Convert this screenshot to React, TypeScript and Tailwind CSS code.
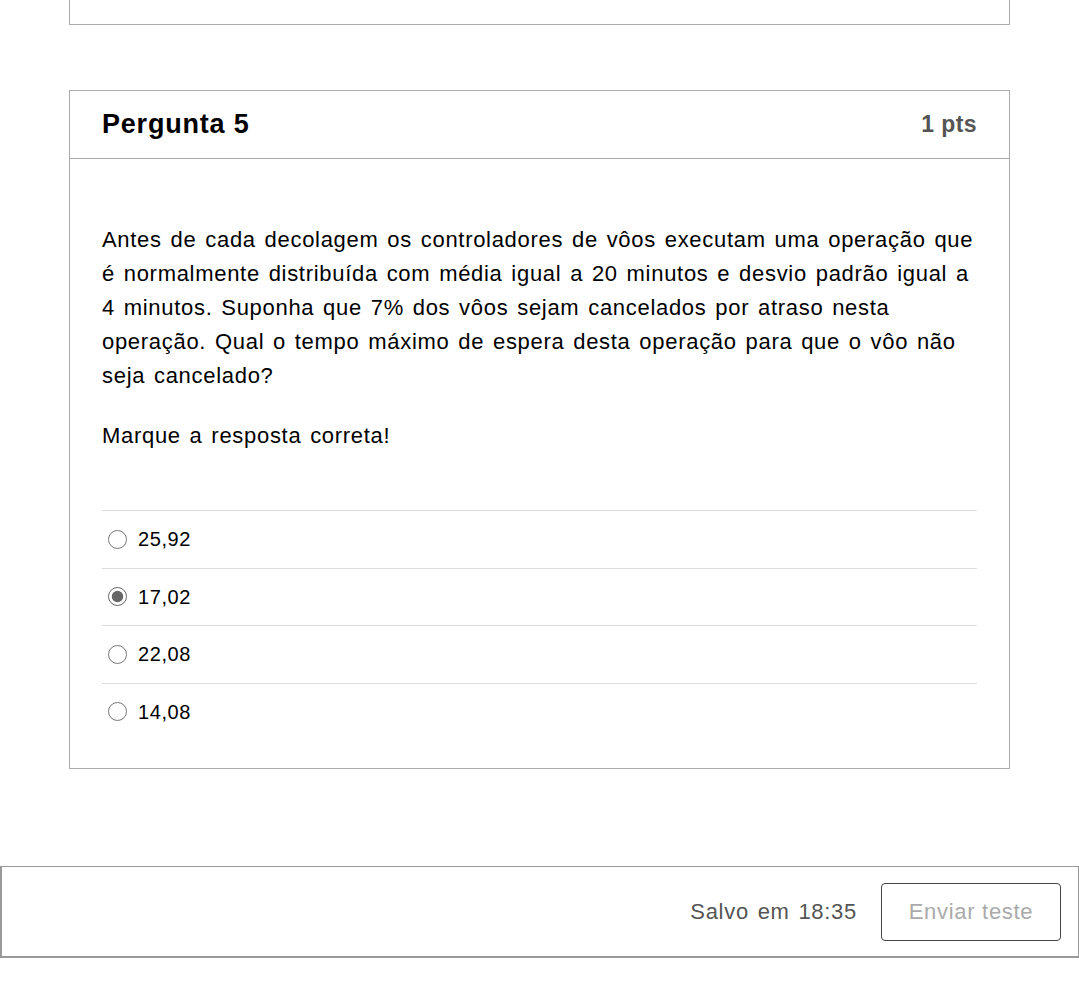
import { useState } from 'react';

const answers = ['25,92', '17,02', '22,08', '14,08'];

export default function App() {
  const [selected, setSelected] = useState('17,02');

  return (
    <div className="min-h-[986px] bg-white text-black" style={{ fontFamily: '"Liberation Sans", Arial, sans-serif' }}>
      {/* previous question (cut off) */}
      <div className="mx-[69px] h-[25px] border-x border-b border-[#aaaaaa]" />

      {/* question card */}
      <div className="mx-[69px] mt-[65px] border border-[#aaaaaa]">
        <div className="flex h-[68px] items-center justify-between border-b border-[#aaaaaa] px-[32px]">
          <h2 className="text-[27px] font-bold tracking-[0.8px]">Pergunta 5</h2>
          <span className="text-[23px] font-bold tracking-[0.4px] text-[#555555]">1 pts</span>
        </div>

        <div className="px-[32px] pt-[64px] pb-[28px] text-[22px] tracking-[0.7px] [word-spacing:2px]">
          <p className="leading-[34px]">
            Antes de cada decolagem os controladores de vôos executam uma operação que é normalmente distribuída com média
            igual a 20 minutos e desvio padrão igual a 4 minutos. Suponha que 7% dos vôos sejam cancelados por atraso nesta
            operação. Qual o tempo máximo de espera desta operação para que o vôo não seja cancelado?
          </p>
          <p className="mt-[26px] leading-[34px]">Marque a resposta correta!</p>

          <div className="mt-[57px]">
            {answers.map((a) => (
              <label
                key={a}
                className="flex h-[57.5px] cursor-pointer items-center border-t border-[#dddddd] pl-[6px]"
              >
                <input
                  type="radio"
                  name="q5"
                  checked={selected === a}
                  onChange={() => setSelected(a)}
                  className="m-0 h-[19px] w-[19px] accent-[#666666]"
                />
                <span className="ml-[11px] text-[20px] tracking-[0.6px]">{a}</span>
              </label>
            ))}
          </div>
        </div>
      </div>

      {/* footer */}
      <div className="mt-[97px] flex h-[92px] items-center justify-end border-t border-r border-b-2 border-l-2 border-[#999999] pr-[17px] text-[22px] tracking-[0.7px] [word-spacing:2px]">
        <span className="mr-[24px] text-[#555555]">Salvo em 18:35</span>
        <button
          type="button"
          className="h-[58px] w-[180px] rounded-[4px] border border-[#444444] text-[#aaaaaa]"
        >
          Enviar teste
        </button>
      </div>
    </div>
  );
}
